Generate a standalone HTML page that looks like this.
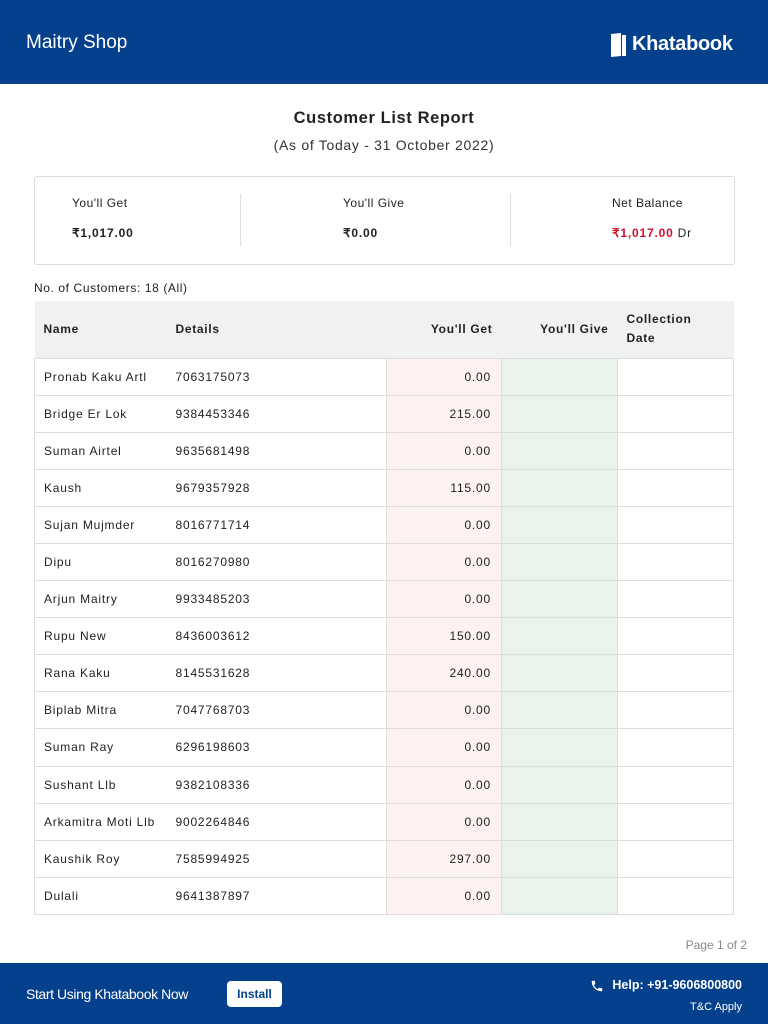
<!DOCTYPE html>
<html><head><meta charset="utf-8"><style>
*{margin:0;padding:0;box-sizing:border-box}
body{width:768px;height:1024px;position:relative;background:#fff;font-family:"Liberation Sans",sans-serif;color:#222;overflow:hidden}
.hdr{position:absolute;left:0;top:0;width:768px;height:84px;background:#05408c}
.abs{position:absolute;white-space:nowrap}
table{position:absolute;left:34px;top:301px;width:700px;border-collapse:collapse;font-size:12px;letter-spacing:0.8px;table-layout:fixed}
td,th{border:1px solid #ddd;height:37.1px;padding:0 9px;text-align:left;white-space:nowrap}
th{background:#f0f1f3;height:57px;font-weight:bold;font-size:12px;border:none;letter-spacing:0.7px}
td.g{background:#fdf1f1;text-align:right;padding-right:10px}
td.v{background:#e8f3ec}
td.n{border-left:1px solid #ddd;border-right:none;overflow:visible}
td.d{border-left:none}
</style></head><body>
<div class="hdr"></div>
<div class="abs" style="left:26px;top:32px;color:#fff;font-size:19px">Maitry Shop</div>
<svg class="abs" style="left:609px;top:32px" width="20" height="26" viewBox="0 0 20 26"><path d="M2 2 L12 1 L12 24 L2 25 Z" fill="#fff"/><path d="M13 3 L17 3 L17 24 L13 24 Z" fill="#fff"/></svg>
<div class="abs" style="left:632px;top:33px;color:#fff;font-size:20px;font-weight:bold;letter-spacing:-0.3px">Khatabook</div>
<div class="abs" style="left:0;width:768px;text-align:center;top:109px;font-size:16.5px;font-weight:bold;letter-spacing:0.6px">Customer List Report</div>
<div class="abs" style="left:0;width:768px;text-align:center;top:137px;font-size:14px;letter-spacing:0.7px;color:#333">(As of Today - 31 October 2022)</div>
<div class="abs" style="left:34px;top:176px;width:701px;height:89px;border:1px solid #ddd;border-radius:3px"></div>
<div class="abs" style="left:240px;top:194px;width:1px;height:52px;background:#ddd"></div>
<div class="abs" style="left:510px;top:194px;width:1px;height:52px;background:#ddd"></div>
<div class="abs" style="left:72px;top:196px;font-size:12px;letter-spacing:0.5px">You'll Get</div>
<div class="abs" style="left:72px;top:226px;font-size:12px;font-weight:bold;letter-spacing:0.8px">₹1,017.00</div>
<div class="abs" style="left:343px;top:196px;font-size:12px;letter-spacing:0.5px">You'll Give</div>
<div class="abs" style="left:343px;top:226px;font-size:12px;font-weight:bold;letter-spacing:0.8px">₹0.00</div>
<div class="abs" style="left:612px;top:196px;font-size:12px;letter-spacing:0.5px">Net Balance</div>
<div class="abs" style="left:612px;top:226px;font-size:12px;letter-spacing:0.8px"><b style="color:#d0112b">₹1,017.00</b> Dr</div>
<div class="abs" style="left:34px;top:281px;font-size:12px;letter-spacing:0.6px">No. of Customers: 18 (All)</div>
<table>
<colgroup><col style="width:132px"><col style="width:220px"><col style="width:115px"><col style="width:116px"><col></colgroup>
<tr><th>Name</th><th>Details</th><th style="text-align:right">You'll Get</th><th style="text-align:right">You'll Give</th><th style="line-height:19px">Collection<br>Date</th></tr>
<tr><td class="n">Pronab Kaku Artl</td><td class="d">7063175073</td><td class="g">0.00</td><td class="v"></td><td></td></tr>
<tr><td class="n">Bridge Er Lok</td><td class="d">9384453346</td><td class="g">215.00</td><td class="v"></td><td></td></tr>
<tr><td class="n">Suman Airtel</td><td class="d">9635681498</td><td class="g">0.00</td><td class="v"></td><td></td></tr>
<tr><td class="n">Kaush</td><td class="d">9679357928</td><td class="g">115.00</td><td class="v"></td><td></td></tr>
<tr><td class="n">Sujan Mujmder</td><td class="d">8016771714</td><td class="g">0.00</td><td class="v"></td><td></td></tr>
<tr><td class="n">Dipu</td><td class="d">8016270980</td><td class="g">0.00</td><td class="v"></td><td></td></tr>
<tr><td class="n">Arjun Maitry</td><td class="d">9933485203</td><td class="g">0.00</td><td class="v"></td><td></td></tr>
<tr><td class="n">Rupu New</td><td class="d">8436003612</td><td class="g">150.00</td><td class="v"></td><td></td></tr>
<tr><td class="n">Rana Kaku</td><td class="d">8145531628</td><td class="g">240.00</td><td class="v"></td><td></td></tr>
<tr><td class="n">Biplab Mitra</td><td class="d">7047768703</td><td class="g">0.00</td><td class="v"></td><td></td></tr>
<tr><td class="n">Suman Ray</td><td class="d">6296198603</td><td class="g">0.00</td><td class="v"></td><td></td></tr>
<tr><td class="n">Sushant Llb</td><td class="d">9382108336</td><td class="g">0.00</td><td class="v"></td><td></td></tr>
<tr><td class="n">Arkamitra Moti Llb</td><td class="d">9002264846</td><td class="g">0.00</td><td class="v"></td><td></td></tr>
<tr><td class="n">Kaushik Roy</td><td class="d">7585994925</td><td class="g">297.00</td><td class="v"></td><td></td></tr>
<tr><td class="n">Dulali</td><td class="d">9641387897</td><td class="g">0.00</td><td class="v"></td><td></td></tr>
</table>
<div class="abs" style="right:21px;top:938px;font-size:12px;color:#888">Page 1 of 2</div>
<div class="abs" style="left:0;top:963px;width:768px;height:61px;background:#05408c"></div>
<div class="abs" style="left:26px;top:986px;color:#fff;font-size:14px;letter-spacing:-0.4px">Start Using Khatabook Now</div>
<div class="abs" style="left:227px;top:981px;width:55px;height:26px;background:#fff;border-radius:4px;color:#05408c;font-size:12px;font-weight:bold;text-align:center;line-height:26px">Install</div>
<svg class="abs" style="left:590px;top:979px" width="14" height="14" viewBox="0 0 24 24"><path fill="#fff" d="M6.6 10.8c1.4 2.8 3.8 5.1 6.6 6.6l2.2-2.2c.3-.3.7-.4 1-.2 1.1.4 2.3.6 3.6.6.6 0 1 .4 1 1V20c0 .6-.4 1-1 1C10.6 21 3 13.4 3 4c0-.6.4-1 1-1h3.5c.6 0 1 .4 1 1 0 1.3.2 2.5.6 3.6.1.3 0 .7-.2 1z"/></svg>
<div class="abs" style="right:26px;top:978px;color:#fff;font-size:12.5px;font-weight:bold">Help: +91-9606800800</div>
<div class="abs" style="right:26px;top:1001px;color:#fff;font-size:11px">T&amp;C Apply</div>
</body></html>
